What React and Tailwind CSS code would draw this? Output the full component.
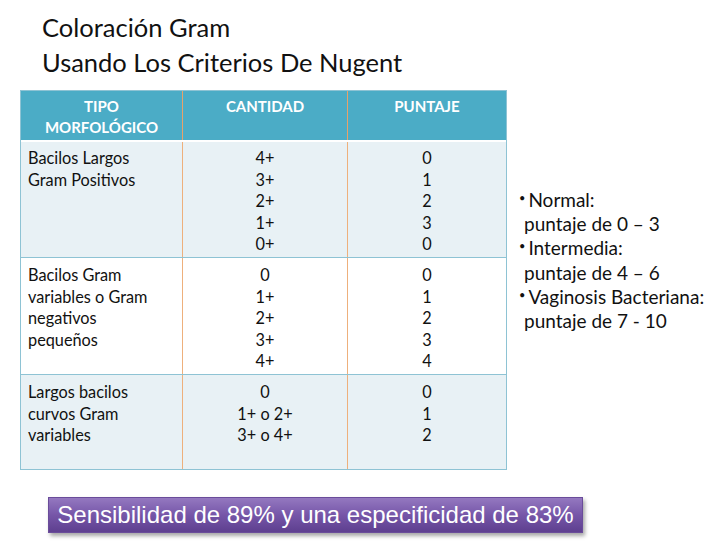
import React from "react";

const rows = [
  {
    bg: "bg-[#e8f1f5]",
    h: "h-[115px]",
    pt: "pt-[5px]",
    tipo: ["Bacilos Largos", "Gram Positivos"],
    cant: ["4+", "3+", "2+", "1+", "0+"],
    punt: ["0", "1", "2", "3", "0"],
  },
  {
    bg: "bg-white",
    h: "h-[117px]",
    pt: "pt-[6px]",
    tipo: ["Bacilos Gram", "variables o Gram", "negativos", "pequeños"],
    cant: ["0", "1+", "2+", "3+", "4+"],
    punt: ["0", "1", "2", "3", "4"],
  },
  {
    bg: "bg-[#e8f1f5]",
    h: "h-[95px]",
    pt: "pt-[6px]",
    tipo: ["Largos bacilos", "curvos Gram", "variables"],
    cant: ["0", "1+ o 2+", "3+ o 4+"],
    punt: ["0", "1", "2"],
  },
];

function Lines({ items, center }) {
  return (
    <div className={center ? "flex flex-col items-center" : "flex flex-col"}>
      {items.map((t, i) => (
        <div key={i} className="leading-[21.5px] whitespace-nowrap">
          {t}
        </div>
      ))}
    </div>
  );
}

export default function App() {
  return (
    <div className="w-[728px] h-[546px] bg-white relative overflow-hidden font-['Lato',sans-serif] text-black">
      <div className="pl-[42px] pt-[10px] text-[25.5px] leading-[35px] text-[#111]">
        <div>Coloración Gram</div>
        <div>Usando Los Criterios De Nugent</div>
      </div>

      <div className="flex mt-[10px]">
        <div className="ml-[20px] w-[487px] border border-[#8ec3d4]">
          <div className="grid grid-cols-[162px_165px_158px] bg-[#4bacc6] h-[51px] text-white font-bold text-[15px] leading-[21px] border-b-[2px] border-[#ffffff]">
            <div className="flex flex-col items-center pt-[5px] border-r border-[#e8a26a]">
              <div>TIPO</div>
              <div>MORFOLÓGICO</div>
            </div>
            <div className="flex flex-col items-center pt-[5px] border-r border-[#e8a26a]">
              <div>CANTIDAD</div>
            </div>
            <div className="flex flex-col items-center pt-[5px]">
              <div>PUNTAJE</div>
            </div>
          </div>
          {rows.map((r, i) => (
            <div
              key={i}
              className={`grid grid-cols-[162px_165px_158px] ${r.bg} ${r.h} text-[16.3px] text-[#111] ${i > 0 ? "border-t border-[#8ec3d4]" : ""}`}
            >
              <div className={`pl-[7px] ${r.pt} border-r border-[#eeb07c]`}>
                <Lines items={r.tipo} />
              </div>
              <div className={`${r.pt} border-r border-[#eeb07c]`}>
                <Lines items={r.cant} center />
              </div>
              <div className={r.pt}>
                <Lines items={r.punt} center />
              </div>
            </div>
          ))}
        </div>

        <div className="ml-[12px] mt-[98px] text-[19px] leading-[24.2px] text-[#111]">
          <div className="flex items-start">
            <span className="text-[11px] leading-[20px] mr-[3px]">•</span>
            <span>Normal:</span>
          </div>
          <div className="pl-[5px]">puntaje de 0 – 3</div>
          <div className="flex items-start">
            <span className="text-[11px] leading-[20px] mr-[3px]">•</span>
            <span>Intermedia:</span>
          </div>
          <div className="pl-[5px]">puntaje de 4 – 6</div>
          <div className="flex items-start">
            <span className="text-[11px] leading-[20px] mr-[3px]">•</span>
            <span className="whitespace-nowrap">Vaginosis Bacteriana:</span>
          </div>
          <div className="pl-[5px]">puntaje de 7 - 10</div>
        </div>
      </div>

      <div className="ml-[48px] mt-[27px] w-[535px] h-[36px] flex items-center justify-center bg-gradient-to-b from-[#9478c0] via-[#7656a8] to-[#5e3f8f] shadow-[2px_3px_4px_rgba(0,0,0,0.35)] border border-[#6a4c9a]">
        <span className="font-['Liberation_Sans',sans-serif] text-white text-[24px] leading-none whitespace-nowrap">
          Sensibilidad de 89% y una especificidad de 83%
        </span>
      </div>
    </div>
  );
}
